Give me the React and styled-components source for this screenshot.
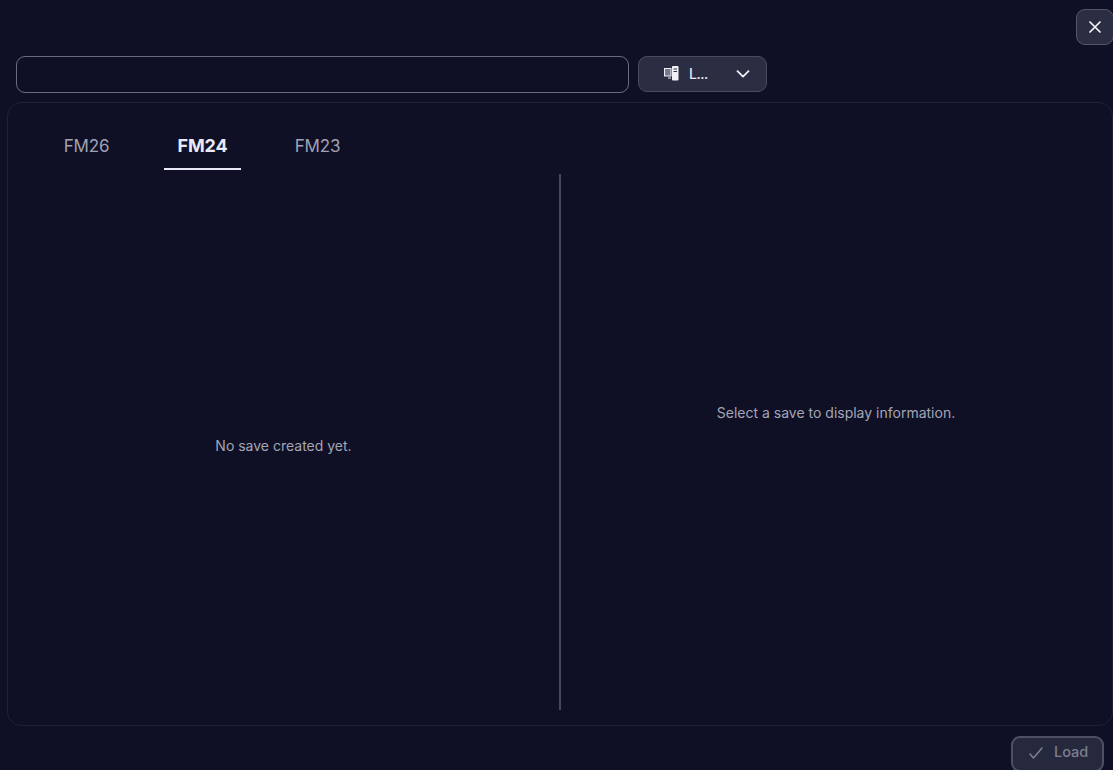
import React from "react";
import styled, { createGlobalStyle } from "styled-components";

const Global = createGlobalStyle`
  html, body { margin: 0; padding: 0; background: #0f1025; overflow: hidden; }
  * { box-sizing: border-box; }
`;
const Page = styled.div`
  width: 1113px; height: 770px; overflow: hidden; background: #0f1025;
  display: flex; flex-direction: column;
  font-family: Inter, "Liberation Sans", sans-serif; color: #a3a5b5;
`;
const TopBar = styled.div`
  height: 36px; margin-top: 9px; display: flex; justify-content: flex-end; flex: none;
`;
const CloseButton = styled.button`
  width: 38px; height: 36px; padding: 0; border-radius: 9px; margin-right: -1px;
  background: #2b2d43; border: 1px solid #54566a; color: #f4f4fa;
  display: flex; align-items: center; justify-content: center;
`;
const SearchRow = styled.div`
  display: flex; gap: 9px; margin: 11px 0 9px 16px; height: 37px; flex: none;
`;
const SearchInput = styled.input`
  width: 613px; height: 37px; background: transparent; border: 1px solid #6a6c7e;
  border-radius: 9px; outline: none;
`;
const Select = styled.button`
  width: 129px; height: 36px; border-radius: 9px; background: #2b2d43; border: 1px solid #494b60;
  color: #e8e8f2; display: flex; align-items: center; padding: 0 16px 0 25px;
  font: 500 14px Inter, "Liberation Sans", sans-serif;
`;
const SelectLabel = styled.span`
  margin-left: 10px; flex: 1; text-align: left; padding-bottom: 1px; letter-spacing: -0.5px;
`;
const Panel = styled.section`
  margin-left: 7px; width: 1106px; height: 624px; flex: none; display: flex; flex-direction: column;
  border: 1px solid #1f2136; border-radius: 14px; background: #0f1025;
`;
const Tabs = styled.nav`
  display: flex; height: 67px; padding: 22px 0 0 42px; flex: none;
`;
const Tab = styled.div`
  width: ${p => p.$w}px; margin-right: ${p => p.$gap}px; height: 45px; display: flex; justify-content: center;
  align-items: center; padding-bottom: ${p => (p.$active ? 3 : 2)}px;
  font-size: ${p => (p.$active ? 18 : 17)}px; letter-spacing: -0.15px;
  font-weight: ${p => (p.$active ? 700 : 400)};
  color: ${p => (p.$active ? "#e9e9f8" : "#a0a2b3")};
  border-bottom: 2px solid ${p => (p.$active ? "#e9e9f8" : "transparent")};
`;
const Columns = styled.div`
  flex: 1; display: flex; padding-top: 4px; padding-bottom: 15px;
`;
const LeftPane = styled.div`
  width: 553px; flex: none; display: flex; align-items: center; justify-content: center;
  font-size: 14px; padding: 6px 0 0 0;
  border-right: 2px solid #45475b;
`;
const RightPane = styled.div`
  flex: 1; display: flex; align-items: center; justify-content: center; font-size: 14px;
  padding: 0 1px 60px 0;
`;
const Footer = styled.div`
  display: flex; justify-content: flex-end; padding: 10px 9px 0 0; flex: none;
`;
const LoadButton = styled.button`
  width: 93px; height: 36px; border-radius: 9px; background: #26283d; border: 2px solid #4d4f63;
  color: #7d7f90; display: flex; align-items: center; gap: 11px; padding: 0 0 6px 16px;
  font: 500 14.5px Inter, "Liberation Sans", sans-serif;
`;

const Computer = () => (
  <svg width="15" height="15" viewBox="0 0 15 15" style={{ flex: "none", marginTop: -2 }}>
    <rect x="0.5" y="2.5" width="6.5" height="7.5" fill="#77788b" stroke="#f0f0f6" strokeWidth="1" />
    <rect x="4" y="11.5" width="3" height="1" fill="#f0f0f6" />
    <rect x="8" y="0" width="6.5" height="14.5" rx="1" fill="#f0f0f6" />
    <rect x="9.5" y="2.5" width="3.5" height="1" fill="#2b2d43" />
    <rect x="9.5" y="5" width="3.5" height="1" fill="#2b2d43" />
  </svg>
);
const Chevron = () => (
  <svg width="14" height="8" viewBox="0 0 14 8" fill="none" stroke="#f0f0f6" strokeWidth="1.8" strokeLinecap="round" strokeLinejoin="round">
    <path d="M1.5 1.2 7 6.6l5.5-5.4" />
  </svg>
);
const Cross = () => (
  <svg width="12" height="12" viewBox="0 0 12 12" fill="none" stroke="#f4f4fa" strokeWidth="1.7" strokeLinecap="round">
    <path d="M1 1l10 10M11 1 1 11" />
  </svg>
);
const Check = () => (
  <svg width="14" height="12" viewBox="0 0 14 12" fill="none" stroke="#7d7f90" strokeWidth="1.5" strokeLinecap="round" strokeLinejoin="round" style={{ marginTop: 3 }}>
    <path d="M1 7l3.5 4L13 1" />
  </svg>
);

export default function App() {
  return (
    <Page>
      <Global />
      <TopBar>
        <CloseButton aria-label="Close"><Cross /></CloseButton>
      </TopBar>
      <SearchRow>
        <SearchInput />
        <Select>
          <Computer />
          <SelectLabel>L...</SelectLabel>
          <Chevron />
        </Select>
      </SearchRow>
      <Panel>
        <Tabs>
          <Tab $w={73} $gap={41}>FM26</Tab>
          <Tab $w={77} $gap={40} $active>FM24</Tab>
          <Tab $w={73} $gap={0}>FM23</Tab>
        </Tabs>
        <Columns>
          <LeftPane>No save created yet.</LeftPane>
          <RightPane>Select a save to display information.</RightPane>
        </Columns>
      </Panel>
      <Footer>
        <LoadButton><Check />Load</LoadButton>
      </Footer>
    </Page>
  );
}
